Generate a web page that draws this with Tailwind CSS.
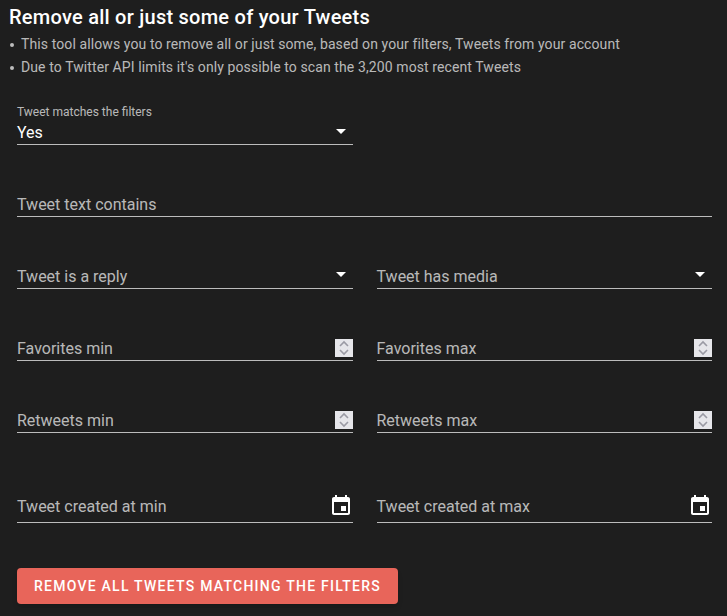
<!DOCTYPE html>
<html lang="en">
<head>
    <meta charset="UTF-8">
    <meta name="viewport" content="width=device-width, initial-scale=1.0">
    <title>Remove Tweets</title>
    <script src="https://cdn.jsdelivr.net/npm/@tailwindcss/browser@4"></script>
</head>
<body class="bg-[#1e1e1e] text-white font-['Roboto',sans-serif] h-[616px] overflow-hidden">
<div class="pl-[17px] pr-[15px]">
    <h1 class="-ml-2 pt-[5px] text-[20px] leading-[24px] font-medium tracking-[0.25px]">Remove all or just some of your Tweets</h1>
    <ul class="-ml-2 mt-[4px] text-[14px] leading-[23px] tracking-[0.1px] text-white/70">
        <li class="flex items-center"><span class="w-[4px] h-[4px] mr-[7px] ml-[1px] rounded-full bg-white/70"></span>This tool allows you to remove all or just some, based on your filters, Tweets from your account</li>
        <li class="flex items-center"><span class="w-[4px] h-[4px] mr-[7px] ml-[1px] rounded-full bg-white/70"></span>Due to Twitter API limits it's only possible to scan the 3,200 most recent Tweets</li>
    </ul>

    <div class="mt-[26px] w-[335.5px]">
        <div class="text-[12px] leading-[14px] text-white/70">Tweet matches the filters</div>
        <div class="flex items-end justify-between h-[26px] border-b border-white/70 pb-[1px]">
            <span class="text-[16px] leading-[20px]">Yes</span>
            <span class="self-center w-0 h-0 mr-[7px] border-x-[5px] border-x-transparent border-t-[5px] border-t-white"></span>
        </div>
    </div>

    <div class="mt-[40px] flex items-end h-[32px] border-b border-white/70 pb-[1px] text-[16px] leading-[20px] text-white/70">Tweet text contains</div>

    <div class="mt-[40px] grid grid-cols-2 gap-x-[24px] gap-y-[40px] text-[16px] leading-[20px] text-white/70">
        <div class="flex items-end justify-between h-[32px] border-b border-white/70 pb-[1px]">
            <span>Tweet is a reply</span>
            <span class="self-center mt-[4px] w-0 h-0 mr-[7px] border-x-[5px] border-x-transparent border-t-[5px] border-t-white"></span>
        </div>
        <div class="flex items-end justify-between h-[32px] border-b border-white/70 pb-[1px]">
            <span>Tweet has media</span>
            <span class="self-center mt-[4px] w-0 h-0 mr-[7px] border-x-[5px] border-x-transparent border-t-[5px] border-t-white"></span>
        </div>
        <div class="flex items-end justify-between h-[32px] border-b border-white/70 pb-[1px]">
            <span>Favorites min</span>
            <svg class="self-end w-[18px] h-[18px] bg-[#e6e6ea] mb-[2px]" viewBox="0 0 18 18" fill="none" stroke="#9a9aa4" stroke-width="1.6"><path d="M5 7l4-4 4 4M5 11l4 4 4-4"/></svg>
        </div>
        <div class="flex items-end justify-between h-[32px] border-b border-white/70 pb-[1px]">
            <span>Favorites max</span>
            <svg class="self-end w-[18px] h-[18px] bg-[#e6e6ea] mb-[2px]" viewBox="0 0 18 18" fill="none" stroke="#9a9aa4" stroke-width="1.6"><path d="M5 7l4-4 4 4M5 11l4 4 4-4"/></svg>
        </div>
        <div class="flex items-end justify-between h-[32px] border-b border-white/70 pb-[1px]">
            <span>Retweets min</span>
            <svg class="self-end w-[18px] h-[18px] bg-[#e6e6ea] mb-[2px]" viewBox="0 0 18 18" fill="none" stroke="#9a9aa4" stroke-width="1.6"><path d="M5 7l4-4 4 4M5 11l4 4 4-4"/></svg>
        </div>
        <div class="flex items-end justify-between h-[32px] border-b border-white/70 pb-[1px]">
            <span>Retweets max</span>
            <svg class="self-end w-[18px] h-[18px] bg-[#e6e6ea] mb-[2px]" viewBox="0 0 18 18" fill="none" stroke="#9a9aa4" stroke-width="1.6"><path d="M5 7l4-4 4 4M5 11l4 4 4-4"/></svg>
        </div>
    </div>

    <div class="mt-[58px] grid grid-cols-2 gap-x-[24px] text-[16px] text-white/70">
        <div class="flex items-center justify-between h-[32px] border-b border-white/70">
            <span>Tweet created at min</span>
            <svg class="w-[24px] h-[24px] mb-[2px]" viewBox="0 0 24 24" fill="#fff"><path d="M17 12h-5v5h5v-5zM16 1v2H8V1H6v2H5c-1.11 0-1.99.9-1.99 2L3 19c0 1.1.89 2 2 2h14c1.1 0 2-.9 2-2V5c0-1.1-.9-2-2-2h-1V1h-2zm3 18H5V8h14v11z"/></svg>
        </div>
        <div class="flex items-center justify-between h-[32px] border-b border-white/70">
            <span>Tweet created at max</span>
            <svg class="w-[24px] h-[24px] mb-[2px]" viewBox="0 0 24 24" fill="#fff"><path d="M17 12h-5v5h5v-5zM16 1v2H8V1H6v2H5c-1.11 0-1.99.9-1.99 2L3 19c0 1.1.89 2 2 2h14c1.1 0 2-.9 2-2V5c0-1.1-.9-2-2-2h-1V1h-2zm3 18H5V8h14v11z"/></svg>
        </div>
    </div>

    <button class="mt-[45px] h-[36px] w-[381px] rounded bg-[#e8655a] text-white text-[14px] font-medium tracking-[1.25px] shadow-md">REMOVE ALL TWEETS MATCHING THE FILTERS</button>
</div>
</body>
</html>
